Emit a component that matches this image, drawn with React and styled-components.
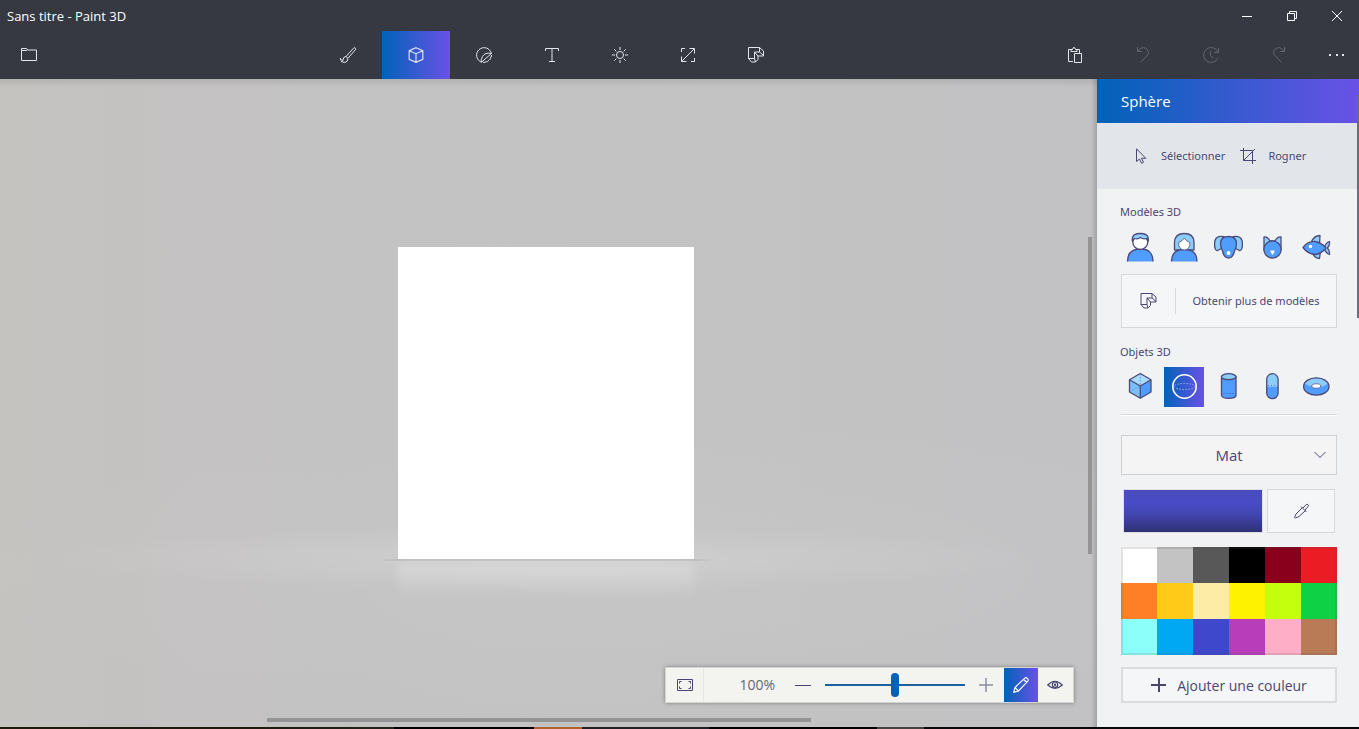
import React, { useState } from "react"
import styled, { createGlobalStyle } from "styled-components";

let GlobalStyle = createGlobalStyle`
    * {
        box-sizing: border-box;
    }

    body {
        margin: 0;
        font-family: "Open Sans", "Noto Sans", sans-serif;
        color: #4a4673;
    }

    button, select, input {
        font-family: inherit;
        color: inherit;
        margin: 0;
    }

    svg {
        display: block;
    }
`

let accent = "linear-gradient(90deg, #0063b8 0%, #6a51e6 100%)"
let smallFont = `"Noto Sans", "Open Sans", sans-serif`

let Window = styled.div`
    display: flex;
    flex-direction: column;
    min-height: 100vh;
    background-color: #373942;
`

let TitleBar = styled.header`
    display: flex;
    justify-content: space-between;
    align-items: center;
    height: 31px;
    padding-left: 7px;
    color: white;
`

let Title = styled.h1`
    margin: 0;
    font-size: 13px;
    line-height: 18px;
    font-weight: 400;
`

let Group = styled.div`
    display: flex;
`

let PlainButton = styled.button`
    display: flex;
    align-items: center;
    justify-content: center;
    padding: 0;
    border: 0;
    background: none;
`

let WindowButton = styled(PlainButton)`
    width: 45px;
    height: 31px;
    color: white;

    &:hover {
        background-color: #4b4d57;
    }
`

let Toolbar = styled.nav`
    display: flex;
    justify-content: space-between;
    height: 48px;
`

let FileGroup = styled(Group)`
    padding-right: 5px;
`

let ToolButton = styled(PlainButton)`
    width: ${props => props.$width || 68}px;
    height: 48px;
    color: #e3e3ea;
    background: ${props => props.$active ? accent : "none"};

    &:disabled {
        color: #62646f;
    }
`

let Body = styled.div`
    display: flex;
    flex: 1;
`

let Workspace = styled.main`
    position: relative;
    display: flex;
    align-items: center;
    justify-content: center;
    flex: 1;
    min-width: 0;
    overflow: hidden;
    padding-right: 5px;
    background:
        linear-gradient(180deg, rgba(0, 0, 0, 0.09), transparent 8px),
        linear-gradient(270deg, rgba(0, 0, 0, 0.16), transparent 6px),
        radial-gradient(ellipse 46% 5% at 50% 74%, rgba(255, 255, 255, 0.18), transparent),
        radial-gradient(ellipse 70% 26% at 58% 76%, rgba(255, 255, 255, 0.05), transparent),
        linear-gradient(90deg, #c5c3c0 0%, #c4c2c2 18%, #c3c3c3 45%, #c2c2c4 100%);
`

let Sheet = styled.div`
    position: relative;
    width: 296px;
    height: 312px;
    background-color: white;

    &::before {
        content: "";
        position: absolute;
        top: 100%;
        left: -20px;
        right: -20px;
        height: 2px;
        background: linear-gradient(90deg, transparent, #bcbcbc 20px, #bcbcbc calc(100% - 20px), transparent);
    }

    &::after {
        content: "";
        position: absolute;
        top: calc(100% + 2px);
        left: 0;
        right: 0;
        height: 38px;
        background: linear-gradient(180deg, rgba(255, 255, 255, 0.2), rgba(255, 255, 255, 0.18) 40%, transparent);
        filter: blur(5px);
    }
`

let ScrollThumb = styled.div`
    position: absolute;
    background-color: ${props => props.$dark ? "#6d6e75" : "#949494"};
    ${props => props.$place === "bottom" && "left: 267px; right: 286px; bottom: 5px; height: 4px;"}
    ${props => props.$place === "right" && "top: 158px; bottom: 173px; right: 5px; width: 4px;"}
    ${props => props.$place === "side" && "top: 16px; height: 223px; right: 0; width: 2px;"}
`

let ZoomBar = styled.div`
    position: absolute;
    right: 23px;
    bottom: 24px;
    display: flex;
    align-items: center;
    height: 36px;
    padding: 0 1px;
    border: 1px solid #d4d4d2;
    background-color: #f3f4f0;
    box-shadow: 0 0 4px rgba(0, 0, 0, 0.35);
`

let ZoomButton = styled(PlainButton)`
    width: 34px;
    height: 34px;
    color: ${props => props.$active ? "white" : "#4a4673"};
    background: ${props => props.$active ? accent : "none"};
`

let FitButton = styled(ZoomButton)`
    width: 37px;
    border-right: 1px solid #e6e7e4;
`

let ZoomValue = styled.output`
    width: 71px;
    margin-right: 11px;
    text-align: right;
    font-size: 14px;
    line-height: 20px;
    color: #666672;
`

let ZoomSlider = styled.input`
    appearance: none;
    width: 140px;
    height: 24px;
    margin: 0 5px;
    background: linear-gradient(#19619f, #19619f) center / 100% 2px no-repeat;

    &::-webkit-slider-thumb {
        appearance: none;
        width: 8px;
        height: 24px;
        border-radius: 4px;
        background-color: #0063b8;
    }
`

let SidePanel = styled.aside`
    position: relative;
    width: 262px;
    background-color: #f0f2f4;
`

let PanelTitle = styled.h2`
    margin: 0;
    padding: 0 24px;
    font-size: 15px;
    line-height: 44px;
    font-weight: 400;
    color: white;
    background: ${accent};
`

let SelectRow = styled.div`
    display: flex;
    align-items: center;
    gap: 15px;
    height: 66px;
    padding-left: 36px;
    background-color: #e2e6ea;
`

let TextButton = styled(PlainButton)`
    gap: 12px;
    font-family: ${smallFont};
    font-size: 11px;
    line-height: 18px;
`

let PanelBody = styled.div`
    display: flex;
    flex-direction: column;
    padding: 14px 22px 24px 23px;
`

let Label = styled.h3`
    margin: 0;
    font-family: ${smallFont};
    font-size: 11px;
    line-height: 18px;
    font-weight: 400;
`

let ShapeRow = styled.div`
    display: flex;
    justify-content: space-between;
    margin: 6px 1px 7px 0;
`

let ShapeButton = styled(PlainButton)`
    width: 40px;
    height: 40px;
    background: ${props => props.$active ? accent : "none"};
`

let MoreButton = styled(PlainButton)`
    height: 54px;
    margin: 0 0 15px 1px;
    border: 1px solid #d6d8db;
    background-color: #f5f6f8;
    font-family: ${smallFont};
    font-size: 11px;

    & > svg {
        width: 53px;
    }
`

let MoreText = styled.span`
    flex: 1;
    border-left: 1px solid #d6d8db;
    line-height: 26px;
`

let Divider = styled.hr`
    width: 100%;
    margin: 0 0 19px;
    border: 0;
    border-top: 1px solid #d6d8db;
    border-bottom: 1px solid white;
`

let Finish = styled.section`
    display: flex;
    flex-direction: column;
    padding-left: 1px;
`

let FinishBox = styled.div`
    display: grid;
    align-items: center;
    margin-bottom: 14px;

    & > * {
        grid-area: 1 / 1;
    }

    & > svg {
        justify-self: end;
        margin-right: 11px;
        pointer-events: none;
    }
`

let FinishSelect = styled.select`
    appearance: none;
    width: 100%;
    height: 40px;
    border: 1px solid #cfd0d1;
    border-radius: 0;
    background-color: #f4f4f4;
    font-size: 15px;
    text-align: center;
    text-align-last: center;
`

let ColorRow = styled.div`
    display: flex;
    gap: 4px;
    height: 44px;
    margin: 0 2px 14px;
`

let CurrentColor = styled(PlainButton)`
    flex: 1;
    border: 1px solid #dcdde6;
    background: linear-gradient(180deg, #4a4cba, #484bc6 30%, #4347b4 55%, #2e3074);
`

let PickerButton = styled(PlainButton)`
    width: 68px;
    border: 1px solid #d6d8db;
    background-color: #f5f6f8;
`

let Palette = styled.div`
    position: relative;
    display: grid;
    grid-template-columns: repeat(6, 1fr);
    margin-bottom: 12px;

    &::after {
        content: "";
        position: absolute;
        inset: 0;
        border: 2px solid rgba(80, 80, 80, 0.16);
        pointer-events: none;
    }
`

let Swatch = styled(PlainButton)`
    height: 36px;
    background-color: ${props => props.$color};
`

let AddButton = styled(PlainButton)`
    gap: 10px;
    height: 36px;
    border: 2px solid #dadcdf;
    background-color: #f5f6f8;
    font-size: 14px;
`

let TaskStrip = styled.footer`
    height: 2px;
    background: linear-gradient(90deg,
        #1d1a12 0 19%, #22231c 29%, #000 29% 39.3%,
        #b0622c 39.3% 42.8%, #1e2026 42.8% 52.2%,
        #000 52.2% 64.5%, #444340 64.5% 68%, #08080a 68%);
`

function Icon({ w = 16, h = 16, children, ...rest }){
    return(
        <svg width={w} height={h} viewBox={`0 0 ${w} ${h}`} fill="none" stroke="currentColor" aria-hidden="true" {...rest}>
            {children}
        </svg>
    )
}

let remixIcon = (
    <Icon>
        <path d="M.5 .5h11l4 3.500v5h-5.500v3.500l-2.500 2.500h-4l-3-3.500zM11.500 .5v4.500h-5v6.500h-6M11.500 5l4 3.500M6.500 11.500l1 3.500M6.500 5l3.500 4"/>
    </Icon>
)

let tools = [
    { name: "Pinceaux", icon: <Icon><path d="M6 9.500L13.500 1.200q1-1 1.800-.2t0 1.800L8 11.300M6 9.500l2 1.800M6 9.500q-2.500 0-2.700 2.500T1.200 14.500q1.500 1 4 .8t2.800-4M.5 11v2h2"/></Icon> },
    { name: "Formes 3D", icon: <Icon strokeWidth="1.200"><path d="M8 .7l6.800 3v8.600L8 15.300l-6.800-3V3.700zM1.200 3.700L8 6.700l6.800-3M8 6.700v8.600"/></Icon> },
    { name: "Autocollants", icon: <Icon><path d="M5.500 15.200A7.500 7.500 0 1 1 15.400 6.500Q9 5 6.500 9.500 4.500 13 5.500 15.200L15.400 6.500"/><path strokeDasharray="2 1.500" d="M15.500 8A7.500 7.500 0 0 1 7 15.400M8.500 15.200Q14 14 15.200 9"/></Icon> },
    { name: "Texte", icon: <Icon><path d="M1.500 4V1.500h13V4M8 1.500v13M5 14.500h6"/></Icon> },
    { name: "Effets", icon: <Icon><circle cx="8" cy="8" r="3.500"/><path d="M8 0v3M8 13v3M0 8h3M13 8h3M2.300 2.300l2 2M11.700 11.700l2 2M2.300 13.700l2-2M11.700 4.300l2-2"/></Icon> },
    { name: "Zone de dessin", icon: <Icon><path d="M1.500 5V1.500H5M11 14.500h3.500V11M2 14L14 2M9.500 1.500h5v5M1.500 9.500v5h5"/></Icon> },
    { name: "Remix 3D", icon: remixIcon },
]

let line = { stroke: "#4c4a78", strokeWidth: 1.3, strokeLinejoin: "round" }
let blue = "#509dff"
let sky = "#8dcdfb"

let models = [
    { name: "Homme", art: <>
        <path {...line} fill={blue} d="M7.500 34.500Q7.500 22 20.300 22T33 34.500"/>
        <circle {...line} fill="white" cx="20.300" cy="15" r="7.500"/>
        <path {...line} fill={sky} d="M12.300 14V11.500Q12.500 6.500 20.300 6.500T28.300 11.500V14L26.500 11.500Q23 12.500 20.500 10.500 18 12.500 14.500 11.500z"/>
    </> },
    { name: "Femme", art: <>
        <path {...line} fill={sky} d="M10.500 23V15Q11 6.500 20.300 6.500T30 15V23z"/>
        <path {...line} fill={blue} d="M7.500 34.500Q7.500 22.500 20.300 22.500T33 34.500"/>
        <path {...line} strokeWidth=".8" fill="white" d="M14.800 15.500Q18.500 14 20.300 11 22 14 25.800 15.500A5.600 6 0 0 1 20.300 23A5.600 6 0 0 1 14.800 15.500z"/>
    </> },
    { name: "Chien", art: <>
        <path {...line} fill={sky} d="M16 9.700Q6.800 8 6.600 16T9.500 23.500L13.500 21.500V14zM25 9.700Q34.200 8 34.400 16T31.500 23.500L27.500 21.500V14z"/>
        <path {...line} fill={blue} d="M12.500 16Q13 9.500 20.500 9.500T28.500 16Q28.500 20 26.500 24 25 31 20.500 31T14.500 24Q12.500 20 12.500 16z"/>
        <circle fill="white" cx="20.500" cy="26" r="1.900"/>
    </> },
    { name: "Chat", art: <>
        <path {...line} fill={sky} d="M12 23V10Q15.500 9.500 18 14H23Q25.500 9.500 29 10V23z"/>
        <circle {...line} fill={blue} cx="20.500" cy="22.500" r="8.600"/>
        <path fill="white" d="M18.500 23.500h4v1.500l-2 3-2-3z"/>
    </> },
    { name: "Poisson", art: <>
        <path {...line} fill={sky} d="M15 15.500Q18 8.500 24 8.500L23.500 17zM16 25Q18 31 23.500 31.500L24.500 24zM28 21Q30 15.500 33.500 14.500 34 18 31.500 21 34 24 33.500 27.500 30 26.500 28 21z"/>
        <path {...line} fill={blue} d="M7 20.500Q12 14 19 14.500 26 16 30 21 26 26 20 27.500 12 27.500 7 20.500z"/>
        <circle fill="white" cx="14.500" cy="19.500" r="1.700"/>
    </> },
]

let objects = [
    { name: "Cube", art: <>
        <path fill="#a9dcfd" d="M20.300 6.500L31 12.700 20.300 19 9.500 12.700z"/>
        <path fill="#7cc0fb" d="M9.500 12.700L20.300 19V31.300L9.500 25z"/>
        <path fill={blue} d="M31 12.700L20.300 19V31.300L31 25z"/>
        <path {...line} d="M20.300 6.500L31 12.700V25L20.300 31.300 9.500 25V12.700zM9.500 12.700L20.300 19 31 12.700M20.300 19V31.300"/>
        <path stroke="#4c7fc0" strokeWidth=".7" strokeDasharray="1.500 1.500" d="M20.300 7V18M10 24.500L20.300 19 31 24.500"/>
    </> },
    { name: "Sphère", art: <>
        <circle stroke="white" strokeWidth="1.600" cx="20.500" cy="19.500" r="11.700"/>
        <ellipse stroke="#9db2f3" strokeDasharray="1.500 1.500" cx="20.500" cy="19.500" rx="10.500" ry="3"/>
    </> },
    { name: "Cylindre", art: <>
        <path {...line} fill={blue} d="M13.500 9.500V28.500Q14 31.300 20.700 31.300T28 28.500V9.500z"/>
        <ellipse {...line} fill={sky} cx="20.700" cy="9.700" rx="7.200" ry="3"/>
        <path stroke="#37599c" strokeDasharray="1 2" d="M15.500 26.500h11"/>
    </> },
    { name: "Capsule", art: <>
        <path fill={sky} d="M14.700 19.500v-7a5.700 5.700 0 0 1 11.400 0v7z"/>
        <path fill={blue} d="M14.700 19.500v6.500a5.700 5.700 0 0 0 11.400 0v-6.500z"/>
        <rect {...line} x="14.700" y="6.700" width="11.400" height="25" rx="5.700"/>
        <path stroke="#4c7fc0" strokeDasharray="1 2" d="M16 18.500h9"/>
    </> },
    { name: "Anneau", art: <>
        <ellipse fill={blue} cx="20.300" cy="19.500" rx="12.700" ry="8.700"/>
        <path fill={sky} d="M8.500 16.500Q12 10.700 20.300 10.700T32 16.500Q26 21 24 18.500 20 16 16.500 18.500 13 20 8.500 16.500z"/>
        <ellipse fill="white" stroke="#4c4a78" strokeWidth=".7" cx="20.300" cy="19" rx="4.500" ry="2.200"/>
        <ellipse {...line} cx="20.300" cy="19.500" rx="12.700" ry="8.700"/>
    </> },
]

let colors = [
    { name: "Blanc", value: "#ffffff" },
    { name: "Gris clair", value: "#c3c3c3" },
    { name: "Gris foncé", value: "#585858" },
    { name: "Noir", value: "#000000" },
    { name: "Rouge foncé", value: "#88001b" },
    { name: "Rouge", value: "#ec1c24" },
    { name: "Orange", value: "#ff7f27" },
    { name: "Or", value: "#ffca18" },
    { name: "Jaune clair", value: "#fdeca6" },
    { name: "Jaune", value: "#fff200" },
    { name: "Citron vert", value: "#c4ff0e" },
    { name: "Vert", value: "#0ed145" },
    { name: "Turquoise clair", value: "#8cfffb" },
    { name: "Turquoise", value: "#00a8f3" },
    { name: "Indigo", value: "#3f48cc" },
    { name: "Violet", value: "#b83dba" },
    { name: "Rose", value: "#ffaec8" },
    { name: "Marron", value: "#b97a56" },
]

function Shapes({ items, selected, onSelect }){
    return(
        <ShapeRow>
            {items.map(item => (
                <ShapeButton key={item.name} aria-label={item.name} $active={item.name === selected} onClick={() => onSelect(item.name)}>
                    <Icon w={40} h={40} stroke="none">{item.art}</Icon>
                </ShapeButton>
            ))}
        </ShapeRow>
    )
}

function App(){

    let [tool, setTool] = useState("Formes 3D")
    let [shape, setShape] = useState("Sphère")
    let [zoom, setZoom] = useState(100)

    return(
        <Window>
            <GlobalStyle />
            <TitleBar>
                <Title>Sans titre - Paint 3D</Title>
                <Group>
                    <WindowButton aria-label="Réduire"><Icon w={10} h={10}><path d="M0 5.500h10"/></Icon></WindowButton>
                    <WindowButton aria-label="Restaurer"><Icon w={10} h={10}><path d="M.5 2.500h7v7h-7zM2.500 2.500v-2h7v7h-2"/></Icon></WindowButton>
                    <WindowButton aria-label="Fermer"><Icon w={10} h={10}><path d="M0 0l10 10M10 0L0 10"/></Icon></WindowButton>
                </Group>
            </TitleBar>
            <Toolbar>
                <FileGroup>
                    <ToolButton $width={58} aria-label="Menu">
                        <Icon><path d="M.5 1.500h5l1 1.500h9v10.500H.5zM.5 3.500h5l1-1"/></Icon>
                    </ToolButton>
                </FileGroup>
                <Group>
                    {tools.map(item => (
                        <ToolButton key={item.name} aria-label={item.name} $active={item.name === tool} onClick={() => setTool(item.name)}>
                            {item.icon}
                        </ToolButton>
                    ))}
                </Group>
                <Group>
                    <ToolButton aria-label="Coller">
                        <Icon><path d="M6 14.500H1.500v-12H4M10 2.500h2.500V6M4 4.500v-2h1.500q.2-2 1.500-2t1.500 2H10v2zM7.500 6.500h7v9h-7z"/></Icon>
                    </ToolButton>
                    <ToolButton aria-label="Annuler" disabled>
                        <Icon><path d="M2.500 0v4.500H7M2.500 4.500Q5 .5 8.500 .5T13.500 5q0 2-1.500 3.500L5.500 15.500"/></Icon>
                    </ToolButton>
                    <ToolButton aria-label="Historique" disabled>
                        <Icon><path d="M15 5A7.500 7.500 0 1 0 15 11M15.500 1v4.500H11M7.500 4v5l3 2"/></Icon>
                    </ToolButton>
                    <ToolButton aria-label="Rétablir" disabled>
                        <Icon><path d="M13.500 0v4.500H9M13.500 4.500Q11 .5 7.500 .5T2.500 5q0 2 1.500 3.500l6.500 7"/></Icon>
                    </ToolButton>
                    <ToolButton $width={46} aria-label="Plus">
                        <Icon><path strokeWidth="2" d="M1 8h2M8 8h2M14 8h2"/></Icon>
                    </ToolButton>
                </Group>
            </Toolbar>
            <Body>
                <Workspace>
                    <Sheet />
                    <ScrollThumb $place="right" />
                    <ScrollThumb $place="bottom" />
                    <ZoomBar>
                        <FitButton aria-label="Ajuster">
                            <Icon><path d="M.5 2.500h15v11H.5zM2.500 6.500v-2h2M11.500 4.500h2v2M13.500 9.500v2h-2M4.500 11.500h-2v-2"/></Icon>
                        </FitButton>
                        <ZoomValue htmlFor="zoom">{zoom}%</ZoomValue>
                        <ZoomButton aria-label="Zoom arrière" onClick={() => setZoom(zoom - 10)}>
                            <Icon><path d="M0 8.500h16"/></Icon>
                        </ZoomButton>
                        <ZoomSlider id="zoom" type="range" min="0" max="200" aria-label="Zoom" value={zoom} onChange={e => setZoom(Number(e.target.value))} />
                        <ZoomButton aria-label="Zoom avant" onClick={() => setZoom(zoom + 10)}>
                            <Icon><path stroke="#8b8aa3" strokeWidth="1.500" d="M0 8h14M7 1v14"/></Icon>
                        </ZoomButton>
                        <ZoomButton aria-label="Modifier" $active>
                            <Icon strokeWidth="1.200"><path d="M.7 15.300l1.300-4.800L12 .9q1.200-.7 2.300.4t.8 2.500L5.500 14zM2 10.500L5.500 14M10.500 2.500L13.800 5.500"/></Icon>
                        </ZoomButton>
                        <ZoomButton aria-label="Afficher">
                            <Icon strokeWidth="1.200"><path d="M.7 8Q8 .5 15.300 8 8 14.500 .7 8z"/><circle cx="8" cy="7.700" r="2.700"/><circle cx="8" cy="7.700" r=".6"/></Icon>
                        </ZoomButton>
                    </ZoomBar>
                </Workspace>
                <SidePanel>
                    <PanelTitle>Sphère</PanelTitle>
                    <SelectRow>
                        <TextButton>
                            <Icon><path d="M3.500 .8v12.700l3-2.500 2 4.300 2-1-2-4h4.300z"/></Icon>
                            Sélectionner
                        </TextButton>
                        <TextButton>
                            <Icon><path d="M0 2.500h12.500V16M3.500 0v12.500H16M3.500 12.500L15 1"/></Icon>
                            Rogner
                        </TextButton>
                    </SelectRow>
                    <PanelBody>
                        <Label>Modèles 3D</Label>
                        <Shapes items={models} selected={shape} onSelect={setShape} />
                        <MoreButton>
                            {remixIcon}
                            <MoreText>Obtenir plus de modèles</MoreText>
                        </MoreButton>
                        <Label>Objets 3D</Label>
                        <Shapes items={objects} selected={shape} onSelect={setShape} />
                        <Finish>
                            <Divider />
                            <FinishBox>
                                <FinishSelect aria-label="Finition" defaultValue="Mat">
                                    <option>Mat</option>
                                </FinishSelect>
                                <Icon w={12} h={8}><path d="M.5 1L6 6.500 11.500 1"/></Icon>
                            </FinishBox>
                            <ColorRow>
                                <CurrentColor aria-label="Couleur actuelle" />
                                <PickerButton aria-label="Pipette">
                                    <Icon><path d="M9.500 4.500L3 11 1.500 14.500l1 .5 3.500-1.500L12.500 7.500M8 3.500l5.500 5.500M10 5L13 1.700q1-1 2 0t0 2L12 7"/></Icon>
                                </PickerButton>
                            </ColorRow>
                            <Palette>
                                {colors.map(color => (
                                    <Swatch key={color.value} aria-label={color.name} $color={color.value} />
                                ))}
                            </Palette>
                            <AddButton>
                                <Icon><path strokeWidth="2" d="M0 8h15M8 1v14"/></Icon>
                                Ajouter une couleur
                            </AddButton>
                        </Finish>
                    </PanelBody>
                    <ScrollThumb $place="side" $dark />
                </SidePanel>
            </Body>
            <TaskStrip />
        </Window>
    )
}

export default App;
